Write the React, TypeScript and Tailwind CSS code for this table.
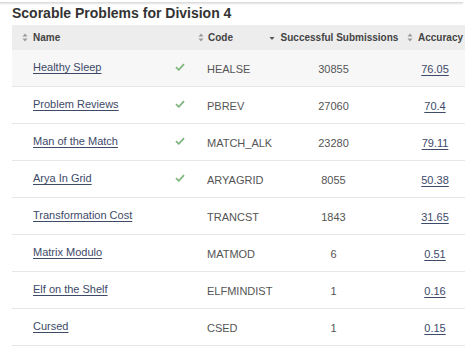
import React from 'react';

interface Problem {
    name: string;
    code: string;
    solved: boolean;
    submissions: number;
    accuracy: string;
}

const PROBLEMS: Problem[] = [
    { name: 'Healthy Sleep', code: 'HEALSE', solved: true, submissions: 30855, accuracy: '76.05' },
    { name: 'Problem Reviews', code: 'PBREV', solved: true, submissions: 27060, accuracy: '70.4' },
    { name: 'Man of the Match', code: 'MATCH_ALK', solved: true, submissions: 23280, accuracy: '79.11' },
    { name: 'Arya In Grid', code: 'ARYAGRID', solved: true, submissions: 8055, accuracy: '50.38' },
    { name: 'Transformation Cost', code: 'TRANCST', solved: false, submissions: 1843, accuracy: '31.65' },
    { name: 'Matrix Modulo', code: 'MATMOD', solved: false, submissions: 6, accuracy: '0.51' },
    { name: 'Elf on the Shelf', code: 'ELFMINDIST', solved: false, submissions: 1, accuracy: '0.16' },
    { name: 'Cursed', code: 'CSED', solved: false, submissions: 1, accuracy: '0.15' },
];

const SortIcon = () => (
    <svg width="6" height="9" viewBox="0 0 6 9" className="shrink-0">
        <path d="M3 0.5 L5.5 3.5 H0.5 Z" fill="#9a9a9a" />
        <path d="M3 8.5 L5.5 5.5 H0.5 Z" fill="#9a9a9a" />
    </svg>
);

const SortDownIcon = () => (
    <svg width="6" height="9" viewBox="0 0 6 9" className="shrink-0">
        <path d="M3 7 L5.5 4 H0.5 Z" fill="#555" />
    </svg>
);

const CheckIcon = () => (
    <svg width="10" height="8" viewBox="0 0 10 8">
        <path d="M1 4.2 L3.8 6.8 L9 1.2" fill="none" stroke="#7fb77f" strokeWidth="1.8" />
    </svg>
);

const COLS = 'grid grid-cols-[158px_20px_72px_143px_60px]';

const App: React.FC = () => {
    return (
        <div className="w-[474px] h-[362px] bg-white overflow-hidden text-[#333]" style={{ fontFamily: '"Liberation Sans", Arial, sans-serif' }}>
            <div className="w-[463px] h-[3px] border-b border-[#dcdcdc] shadow-[0_1px_2px_rgba(0,0,0,0.12)]" />

            <h2 className="px-3 h-[22px] flex items-center pb-[1px] text-[14px] font-bold text-[#333]">Scorable Problems for Division 4</h2>

            <div className="mx-3 w-[453px]">
                {/* header */}
                <div className={`${COLS} h-[25px] items-center bg-[#ededed] text-[10px] font-bold text-[#444]`}>
                    <div className="flex items-center gap-[5px] pl-[10px]"><SortIcon /><span>Name</span></div>
                    <div />
                    <div className="flex items-center gap-[4px] pl-[8px]"><SortIcon /><span>Code</span></div>
                    <div className="flex items-center justify-center gap-[6px]"><SortDownIcon /><span>Successful Submissions</span></div>
                    <div className="flex items-center justify-center gap-[5px]"><SortIcon /><span>Accuracy</span></div>
                </div>

                {PROBLEMS.map((p, i) => (
                    <div key={p.code}
                        className={`${COLS} h-[37px] items-center border-b border-[#e6e6e6] text-[11px] ${i === 0 ? 'bg-[#f7f7f7]' : ''}`}
                    >
                        <div className="pl-[21px] pb-[1px]">
                            <span className="text-[#3d4a68] underline underline-offset-2">{p.name}</span>
                        </div>
                        <div className="flex justify-center pb-[2px]">{p.solved && <CheckIcon />}</div>
                        <div className="pl-[17px] pt-[2px] text-[#555]">{p.code}</div>
                        <div className="text-center pt-[2px] text-[#555]">{p.submissions}</div>
                        <div className="text-center pt-[2px]">
                            <span className="text-[#3d4a68] underline underline-offset-2">{p.accuracy}</span>
                        </div>
                    </div>
                ))}
            </div>
        </div>
    );
};

export default App;
